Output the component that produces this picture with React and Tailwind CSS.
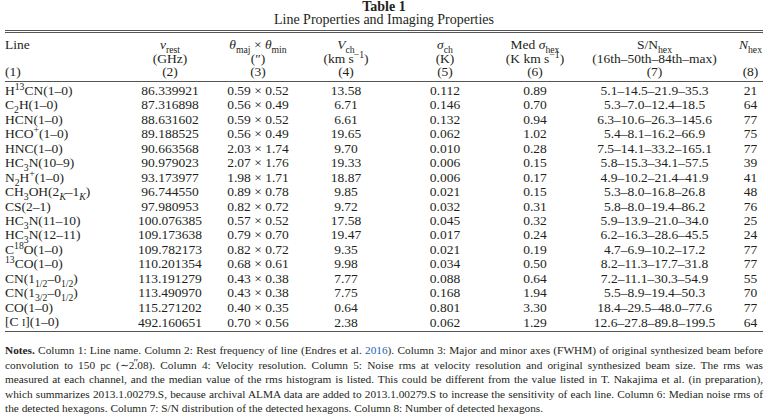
import React from "react";

const cols = "grid grid-cols-[120px_90px_86px_90px_108px_72px_167px_25px]";

const Sub = ({ children, i }) => (
  <span className={"align-sub text-[0.72em] leading-[0] " + (i ? "italic" : "")}>{children}</span>
);
const Sup = ({ children }) => (
  <span className="align-super text-[0.72em] leading-[0]">{children}</span>
);

const rows = [
  [<>H<Sup>13</Sup>CN(1–0)</>, "86.339921", "0.59 × 0.52", "13.58", "0.112", "0.89", "5.1–14.5–21.9–35.3", "21"],
  [<>C<Sub>2</Sub>H(1–0)</>, "87.316898", "0.56 × 0.49", "6.71", "0.146", "0.70", "5.3–7.0–12.4–18.5", "64"],
  [<>HCN(1–0)</>, "88.631602", "0.59 × 0.52", "6.61", "0.132", "0.94", "6.3–10.6–26.3–145.6", "77"],
  [<>HCO<Sup>+</Sup>(1–0)</>, "89.188525", "0.56 × 0.49", "19.65", "0.062", "1.02", "5.4–8.1–16.2–66.9", "75"],
  [<>HNC(1–0)</>, "90.663568", "2.03 × 1.74", "9.70", "0.010", "0.28", "7.5–14.1–33.2–165.1", "77"],
  [<>HC<Sub>3</Sub>N(10–9)</>, "90.979023", "2.07 × 1.76", "19.33", "0.006", "0.15", "5.8–15.3–34.1–57.5", "39"],
  [<>N<Sub>2</Sub>H<Sup>+</Sup>(1–0)</>, "93.173977", "1.98 × 1.71", "18.87", "0.006", "0.17", "4.9–10.2–21.4–41.9", "41"],
  [<>CH<Sub>3</Sub>OH(2<Sub i>K</Sub>–1<Sub i>K</Sub>)</>, "96.744550", "0.89 × 0.78", "9.85", "0.021", "0.15", "5.3–8.0–16.8–26.8", "48"],
  [<>CS(2–1)</>, "97.980953", "0.82 × 0.72", "9.72", "0.032", "0.31", "5.8–8.0–19.4–86.2", "76"],
  [<>HC<Sub>3</Sub>N(11–10)</>, "100.076385", "0.57 × 0.52", "17.58", "0.045", "0.32", "5.9–13.9–21.0–34.0", "25"],
  [<>HC<Sub>3</Sub>N(12–11)</>, "109.173638", "0.79 × 0.70", "19.47", "0.017", "0.24", "6.2–16.3–28.6–45.5", "24"],
  [<>C<Sup>18</Sup>O(1–0)</>, "109.782173", "0.82 × 0.72", "9.35", "0.021", "0.19", "4.7–6.9–10.2–17.2", "77"],
  [<><Sup>13</Sup>CO(1–0)</>, "110.201354", "0.68 × 0.61", "9.98", "0.034", "0.50", "8.2–11.3–17.7–31.8", "77"],
  [<>CN(1<Sub>1/2</Sub>–0<Sub>1/2</Sub>)</>, "113.191279", "0.43 × 0.38", "7.77", "0.088", "0.64", "7.2–11.1–30.3–54.9", "55"],
  [<>CN(1<Sub>3/2</Sub>–0<Sub>1/2</Sub>)</>, "113.490970", "0.43 × 0.38", "7.75", "0.168", "1.94", "5.5–8.9–19.4–50.3", "70"],
  [<>CO(1–0)</>, "115.271202", "0.40 × 0.35", "0.64", "0.801", "3.30", "18.4–29.5–48.0–77.6", "77"],
  [<>[C <span className="text-[0.75em]">I</span>](1–0)</>, "492.160651", "0.70 × 0.56", "2.38", "0.062", "1.29", "12.6–27.8–89.8–199.5", "64"],
];

const header1 = [
  "Line",
  <><i>ν</i><Sub>rest</Sub></>,
  <><i>θ</i><Sub>maj</Sub> × <i>θ</i><Sub>min</Sub></>,
  <><i>V</i><Sub>ch</Sub></>,
  <><i>σ</i><Sub>ch</Sub></>,
  <>Med <i>σ</i><Sub>hex</Sub></>,
  <>S/N<Sub>hex</Sub></>,
  <><i>N</i><Sub>hex</Sub></>,
];
const header2 = [
  "",
  "(GHz)",
  "(″)",
  <>(km s<Sup>−1</Sup>)</>,
  "(K)",
  <>(K km s<Sup>−1</Sup>)</>,
  "(16th–50th–84th–max)",
  "",
];
const header3 = ["(1)", "(2)", "(3)", "(4)", "(5)", "(6)", "(7)", "(8)"];

const Row = ({ cells, h = "h-[14.44px]" }) => (
  <div className={cols + " items-center " + h}>
    {cells.map((c, i) => (
      <div key={i} className={(i === 0 ? "text-left" : "text-center") + " whitespace-nowrap"}>
        {c}
      </div>
    ))}
  </div>
);

const J = ({ children, last }) => (
  <div className={"h-[14.5px] whitespace-nowrap " + (last ? "text-left" : "text-justify [text-align-last:justify]")}>
    {children}
  </div>
);

const Rule = () => <div className="border-t border-[#555]" />;

export default function App() {
  return (
    <div className="w-[768px] h-[420px] overflow-hidden bg-white text-[#231f20] font-['Liberation_Serif',serif] text-[13.5px] leading-[14.44px] px-[5px] flex flex-col">
      <div className="flex flex-col items-center">
        <div className="font-bold text-[14px] h-[13px]">Table 1</div>
        <div className="text-[14px] h-[14px]">Line Properties and Imaging Properties</div>
      </div>
      <div className="flex flex-col gap-[1px] pt-[3px]">
        <Rule />
        <Rule />
      </div>
      <div className="flex flex-col pt-[5px] pb-[2px]">
        <Row cells={header1} h="h-[14px]" />
        <Row cells={header2} h="h-[13px]" />
        <Row cells={header3} h="h-[14px]" />
      </div>
      <Rule />
      <div className="flex flex-col pt-[2px] pb-[2px]">
        {rows.map((r, i) => (
          <Row key={i} cells={r} />
        ))}
      </div>
      <Rule />
      <div className="flex flex-col pt-[11px] text-[11.3px]">
        <J>
          <b>Notes.</b> Column 1: Line name. Column 2: Rest frequency of line (Endres et al. <span className="text-[#1a5fb4]">2016</span>). Column 3: Major and minor axes (FWHM) of original synthesized beam before
        </J>
        <J>
          convolution to 150 pc (∼2<span className="relative inline-block">.<span className="absolute left-[-1px] top-[-3px]">″</span></span>08). Column 4: Velocity resolution. Column 5: Noise rms at velocity resolution and original synthesized beam size. The rms was
        </J>
        <J>
          measured at each channel, and the median value of the rms histogram is listed. This could be different from the value listed in T. Nakajima et al. (in preparation),
        </J>
        <J>
          which summarizes 2013.1.00279.S, because archival ALMA data are added to 2013.1.00279.S to increase the sensitivity of each line. Column 6: Median noise rms of
        </J>
        <J last>
          the detected hexagons. Column 7: S/N distribution of the detected hexagons. Column 8: Number of detected hexagons.
        </J>
      </div>
    </div>
  );
}
